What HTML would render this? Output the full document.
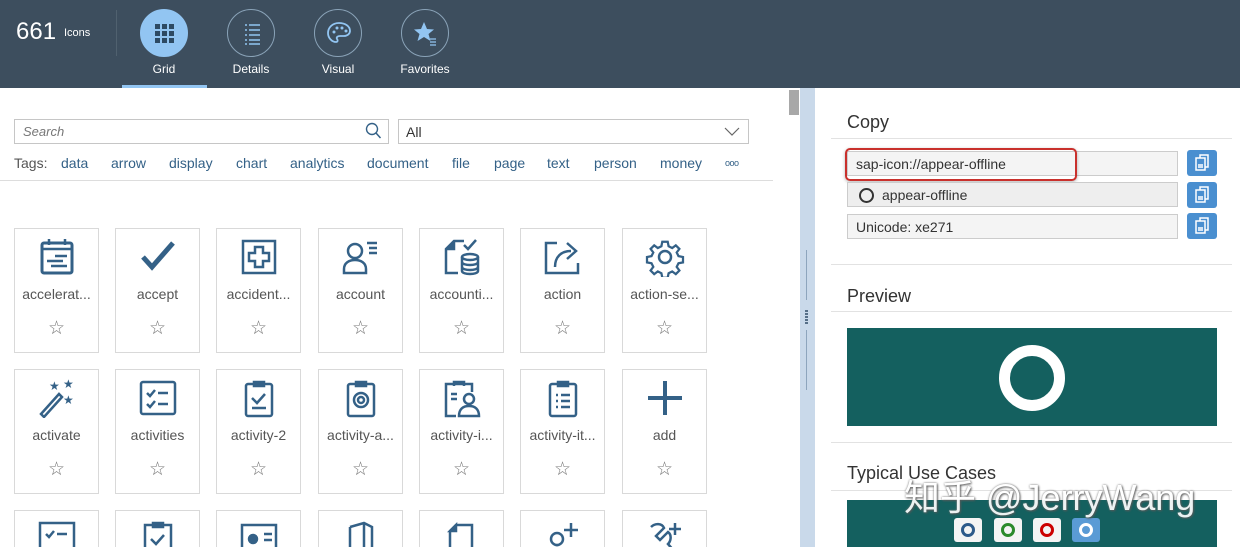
<!DOCTYPE html>
<html><head><meta charset="utf-8"><style>
*{box-sizing:border-box;margin:0;padding:0}
html{width:1240px;height:547px;overflow:hidden}
body{width:1240px;height:547px;overflow:hidden;background:#fff;font-family:"Liberation Sans",sans-serif;position:relative}
.abs{position:absolute}
#hdr{left:0;top:0;width:1240px;height:88px;background:#3d4e5e}
.nb{position:absolute;top:9px;width:48px;height:48px;border-radius:50%;border:1px solid #8aa3b8}
.nl{position:absolute;top:62px;color:#fff;font-size:12px;text-align:center;width:90px}
.tile{position:absolute;width:85px;height:125px;border:1px solid #d9d9d9;background:#fff}
.tile svg{position:absolute;left:22px;top:8px}
.tile .lb{position:absolute;top:57px;width:100%;text-align:center;font-size:14px;color:#555}
.tile .st{position:absolute;top:88px;width:100%;text-align:center;font-size:19px;color:#777}
.tag{position:absolute;top:155px;font-size:14px;color:#346187}
.fld{position:absolute;left:847px;width:331px;height:25px;border:1px solid #ccc;background:#f4f4f4;font-size:14px;color:#333;padding:4px 8px}
.cb{position:absolute;left:1187px;width:30px;height:26px;background:#4a8fd0;border-radius:3px}
.sec{position:absolute;left:847px;font-size:18px;color:#333}
.ln{position:absolute;left:831px;width:401px;height:1px;background:#e2e2e2}
.ub{position:absolute;top:518px;width:28px;height:24px;border-radius:3px;background:#f4f4f4}
.ub i{position:absolute;left:7px;top:5px;width:14px;height:14px;border-radius:50%;border:3px solid}
</style></head><body>
<div id="hdr" class="abs">
 <div class="abs" style="left:16px;top:18px;color:#fff;font-size:24px">661</div>
 <div class="abs" style="left:64px;top:27px;color:#fff;font-size:11px">Icons</div>
 <div class="abs" style="left:116px;top:10px;width:1px;height:46px;background:#50616f"></div>
 <div class="nb" style="left:140px;background:#92c5f2;border-color:#92c5f2"><svg width="48" height="48"><g fill="#2d4a63"><rect x="14" y="14" width="5" height="5"/><rect x="21" y="14" width="5" height="5"/><rect x="28" y="14" width="5" height="5"/><rect x="14" y="21" width="5" height="5"/><rect x="21" y="21" width="5" height="5"/><rect x="28" y="21" width="5" height="5"/><rect x="14" y="28" width="5" height="5"/><rect x="21" y="28" width="5" height="5"/><rect x="28" y="28" width="5" height="5"/></g></svg></div>
 <div class="nl" style="left:119px">Grid</div>
 <div class="abs" style="left:122px;top:85px;width:85px;height:3px;background:#92c5f2"></div>
 <div class="nb" style="left:227px"><svg width="48" height="48" stroke="#92c5f2" stroke-width="1.5"><path d="M17 15h2M21 15h11M17 20h2M21 20h11M17 25h2M21 25h11M17 30h2M21 30h11M17 34h2M21 34h11"/></svg></div>
 <div class="nl" style="left:206px">Details</div>
 <div class="nb" style="left:314px"><svg width="48" height="48"><path d="M24 13c-7 0-11 5-11 10 0 5 4 9 8 9 2 0 2-2 1-3-1-2 1-3 3-3h4c3 0 6-2 6-5 0-5-5-8-11-8z" fill="none" stroke="#92c5f2" stroke-width="1.8"/><g fill="#92c5f2"><circle cx="19" cy="22" r="1.5"/><circle cx="22" cy="18" r="1.5"/><circle cx="27" cy="18" r="1.5"/><circle cx="31" cy="21" r="1.5"/></g></svg></div>
 <div class="nl" style="left:293px">Visual</div>
 <div class="nb" style="left:401px"><svg width="48" height="48"><path d="M22 12l3 7 7 .5-5.5 4.5 2 7-6.5-4-6.5 4 2-7L12 19.5l7-.5z" fill="#92c5f2"/><path d="M28 29h6M28 32h6M28 35h6" stroke="#92c5f2" stroke-width="1.3"/></svg></div>
 <div class="nl" style="left:380px">Favorites</div>
</div>
<div class="abs" style="left:789px;top:90px;width:10px;height:25px;background:#a8a8a8"></div>
<div class="abs" style="left:800px;top:88px;width:15px;height:459px;background:#c9d9ea"></div>
<div class="abs" style="left:806px;top:250px;width:1px;height:50px;background:#8da5bd"></div>
<div class="abs" style="left:806px;top:330px;width:1px;height:60px;background:#8da5bd"></div>
<div class="abs" style="left:805px;top:310px;width:3px;height:14px;background:repeating-linear-gradient(#566f88 0 2px,transparent 2px 3px)"></div>

<div class="abs" style="left:14px;top:119px;width:375px;height:25px;border:1px solid #c6c6c6"></div>
<div class="abs" style="left:23px;top:124px;font-size:13px;color:#777;font-style:italic">Search</div>
<svg class="abs" style="left:364px;top:122px" width="18" height="18"><circle cx="8" cy="7" r="5.5" fill="none" stroke="#346187" stroke-width="1.4"/><path d="M12 11l4.5 5" stroke="#346187" stroke-width="1.5"/></svg>
<div class="abs" style="left:398px;top:119px;width:351px;height:25px;border:1px solid #c6c6c6"></div>
<div class="abs" style="left:406px;top:124px;font-size:14px;color:#333">All</div>
<svg class="abs" style="left:724px;top:125px" width="16" height="12"><path d="M1 3l7 7 7-7" fill="none" stroke="#666" stroke-width="1.2"/></svg>
<div class="tag" style="left:14px;color:#555">Tags:</div>
<div class="tag" style="left:61px">data</div><div class="tag" style="left:111px">arrow</div><div class="tag" style="left:169px">display</div><div class="tag" style="left:236px">chart</div><div class="tag" style="left:290px">analytics</div><div class="tag" style="left:367px">document</div><div class="tag" style="left:452px">file</div><div class="tag" style="left:494px">page</div><div class="tag" style="left:547px">text</div><div class="tag" style="left:594px">person</div><div class="tag" style="left:660px">money</div><div class="tag" style="left:725px;font-size:9px;top:158px;letter-spacing:-0.5px">ooo</div>
<div class="abs" style="left:0;top:180px;width:773px;height:1px;background:#ddd"></div>

<div class="tile" style="left:14px;top:228px"><svg width="40" height="40" fill="none" stroke="#346187" stroke-width="3"><rect x="5" y="6" width="30" height="30" rx="2"/><path d="M5 12h30M12 2v6M28 2v6M18 19h12M10 24h16M14 29h16" stroke-width="2.5"/></svg><div class="lb">accelerat...</div><div class="st">☆</div></div>
<div class="tile" style="left:115px;top:228px"><svg width="40" height="40" fill="none" stroke="#346187" stroke-width="5"><path d="M5 20l9 10L35 6"/></svg><div class="lb">accept</div><div class="st">☆</div></div>
<div class="tile" style="left:216px;top:228px"><svg width="40" height="40" fill="none" stroke="#346187" stroke-width="2.5"><rect x="4" y="4" width="32" height="32"/><path d="M16 10h8v6h6v8h-6v6h-8v-6h-6v-8h6z"/></svg><div class="lb">accident...</div><div class="st">☆</div></div>
<div class="tile" style="left:318px;top:228px"><svg width="40" height="40" fill="none" stroke="#346187" stroke-width="2.5"><circle cx="14" cy="14" r="7"/><path d="M3 36v-4c0-6 5-9 11-9s11 3 11 9v4zM26 6h10M28 11h8M28 16h8"/></svg><div class="lb">account</div><div class="st">☆</div></div>
<div class="tile" style="left:419px;top:228px"><svg width="40" height="40" fill="none" stroke="#346187" stroke-width="2.5"><path d="M16 36H4V12l8-8h10"/><path d="M4 12h8V4" fill="#346187"/><path d="M22 8l4 4 8-9"/><ellipse cx="28" cy="20" rx="8" ry="3"/><path d="M20 20v14c0 4 16 4 16 0V20M20 25c0 4 16 4 16 0M20 30c0 4 16 4 16 0"/></svg><div class="lb">accounti...</div><div class="st">☆</div></div>
<div class="tile" style="left:520px;top:228px"><svg width="40" height="40" fill="none" stroke="#346187" stroke-width="2.5"><path d="M14 6H3v30h32V26M12 30c0-10 6-16 16-16M24 6l9 8-9 8"/></svg><div class="lb">action</div><div class="st">☆</div></div>
<div class="tile" style="left:622px;top:228px"><svg width="40" height="40" fill="none" stroke="#346187" stroke-width="2.5"><circle cx="20" cy="20" r="6"/><path d="M17 3h6l1 5 4 2 4-3 4 4-3 4 2 4 5 1v6l-5 1-2 4 3 4-4 4-4-3-4 2-1 5h-6l-1-5-4-2-4 3-4-4 3-4-2-4-5-1v-6l5-1 2-4-3-4 4-4 4 3 4-2z" transform="translate(2 2) scale(.9)"/></svg><div class="lb">action-se...</div><div class="st">☆</div></div>

<div class="tile" style="left:14px;top:369px"><svg width="40" height="40"><path d="M4 36l18-20 3 3-18 20z" fill="none" stroke="#346187" stroke-width="2.5"/><g fill="#346187" font-size="12"><text x="12" y="12">★</text><text x="26" y="10">★</text><text x="26" y="26">★</text></g></svg><div class="lb">activate</div><div class="st">☆</div></div>
<div class="tile" style="left:115px;top:369px"><svg width="40" height="40" fill="none" stroke="#346187" stroke-width="2.5"><rect x="3" y="4" width="34" height="32" rx="2"/><path d="M9 15l3 3 5-6M20 15h10M9 26l3 3 5-6M20 26h10"/></svg><div class="lb">activities</div><div class="st">☆</div></div>
<div class="tile" style="left:216px;top:369px"><svg width="40" height="40" fill="none" stroke="#346187" stroke-width="2.5"><rect x="7" y="6" width="26" height="32" rx="2"/><path d="M15 8V4h10v4zM13 20l5 5 8-9M13 30h14"/></svg><div class="lb">activity-2</div><div class="st">☆</div></div>
<div class="tile" style="left:318px;top:369px"><svg width="40" height="40" fill="none" stroke="#346187" stroke-width="2.5"><rect x="7" y="6" width="26" height="32" rx="2"/><path d="M15 8V4h10v4z"/><circle cx="20" cy="22" r="7"/><circle cx="20" cy="22" r="3"/></svg><div class="lb">activity-a...</div><div class="st">☆</div></div>
<div class="tile" style="left:419px;top:369px"><svg width="40" height="40" fill="none" stroke="#346187" stroke-width="2.5"><path d="M14 38H4V6h26v8M12 8V4h10v4M9 16h6M9 21h6"/><circle cx="27" cy="21" r="5"/><path d="M17 38c0-7 4-10 10-10s10 3 10 10z"/></svg><div class="lb">activity-i...</div><div class="st">☆</div></div>
<div class="tile" style="left:520px;top:369px"><svg width="40" height="40" fill="none" stroke="#346187" stroke-width="2.5"><rect x="7" y="6" width="26" height="32" rx="2"/><path d="M15 8V4h10v4zM13 17h2M18 17h9M13 23h2M18 23h9M13 29h2M18 29h9"/></svg><div class="lb">activity-it...</div><div class="st">☆</div></div>
<div class="tile" style="left:622px;top:369px"><svg width="40" height="40" fill="none" stroke="#346187" stroke-width="4"><path d="M20 3v34M3 20h34"/></svg><div class="lb">add</div><div class="st">☆</div></div>

<div class="tile" style="left:14px;top:510px;height:37px;border-bottom:none"><svg width="40" height="40" fill="none" stroke="#346187" stroke-width="2.5"><rect x="3" y="4" width="34" height="40"/><path d="M9 15l3 3 5-6M20 15h10"/></svg></div>
<div class="tile" style="left:115px;top:510px;height:37px;border-bottom:none"><svg width="40" height="40" fill="none" stroke="#346187" stroke-width="2.5"><rect x="7" y="6" width="26" height="40"/><path d="M15 8V4h10v4zM13 20l5 5 8-9"/></svg></div>
<div class="tile" style="left:216px;top:510px;height:37px;border-bottom:none"><svg width="40" height="40" fill="none" stroke="#346187" stroke-width="2.5"><rect x="3" y="6" width="34" height="40"/><circle cx="14" cy="20" r="4" fill="#346187"/><path d="M7 40v-10h14v10z" fill="#346187"/><path d="M25 15h8M25 21h8"/></svg></div>
<div class="tile" style="left:318px;top:510px;height:37px;border-bottom:none"><svg width="40" height="40" fill="none" stroke="#346187" stroke-width="2.5"><path d="M9 8l14-4 8 4v40M9 8v40M23 4v40"/></svg></div>
<div class="tile" style="left:419px;top:510px;height:37px;border-bottom:none"><svg width="40" height="40" fill="none" stroke="#346187" stroke-width="2.5"><path d="M8 48V12l6-6h16v42"/><path d="M8 12h6V6z" fill="#346187"/></svg></div>
<div class="tile" style="left:520px;top:510px;height:37px;border-bottom:none"><svg width="40" height="40" fill="none" stroke="#346187" stroke-width="2.5"><circle cx="14" cy="20" r="6"/><path d="M4 40c0-8 4-11 10-11s10 3 10 11M28 4v14M21 11h14"/></svg></div>
<div class="tile" style="left:622px;top:510px;height:37px;border-bottom:none"><svg width="40" height="40" fill="none" stroke="#346187" stroke-width="2.5"><path d="M6 8c4-4 11-4 13 1l-8 8 4 4 8-8c4 3 3 9 0 12L36 40M30 4v12M24 10h12"/></svg></div>

<div class="sec" style="top:112px">Copy</div>
<div class="ln" style="top:138px"></div>
<div class="fld" style="top:151px;background:#f4f4f4">sap-icon://appear-offline</div>
<div class="abs" style="left:845px;top:148px;width:232px;height:33px;border:2px solid #c9302c;border-radius:5px;box-shadow:0 1px 3px rgba(0,0,0,.3)"></div>
<div class="fld" style="top:182px;padding-left:34px;background:#eeeeee">appear-offline</div>
<div class="abs" style="left:859px;top:188px;width:15px;height:15px;border-radius:50%;border:2.5px solid #333"></div>
<div class="fld" style="top:214px">Unicode: xe271</div>
<div class="cb" style="top:150px"></div><div class="cb" style="top:182px"></div><div class="cb" style="top:213px"></div>
<svg class="abs" style="left:1193px;top:153px" width="20" height="90" fill="none" stroke="#fff" stroke-width="1.5"><g><rect x="3" y="5" width="9" height="12"/><path d="M7 5V2h8v12h-3M5 12h5M5 14h5"/></g><g transform="translate(0 32)"><rect x="3" y="5" width="9" height="12"/><path d="M7 5V2h8v12h-3M5 12h5M5 14h5"/></g><g transform="translate(0 63)"><rect x="3" y="5" width="9" height="12"/><path d="M7 5V2h8v12h-3M5 12h5M5 14h5"/></g></svg>
<div class="ln" style="top:264px"></div>
<div class="sec" style="top:286px">Preview</div>
<div class="ln" style="top:311px"></div>
<div class="abs" style="left:847px;top:328px;width:370px;height:98px;background:#14605f"></div>
<div class="abs" style="left:999px;top:345px;width:66px;height:66px;border-radius:50%;border:11px solid #fff"></div>
<div class="ln" style="top:442px"></div>
<div class="sec" style="top:463px">Typical Use Cases</div>
<div class="ln" style="top:490px"></div>
<div class="abs" style="left:847px;top:500px;width:370px;height:47px;background:#14605f"></div>
<div class="ub" style="left:954px"><i style="border-color:#2d5a8a"></i></div>
<div class="ub" style="left:994px"><i style="border-color:#2b8a2b"></i></div>
<div class="ub" style="left:1033px"><i style="border-color:#c00"></i></div>
<div class="ub" style="left:1072px;background:#5a9bd5"><i style="border-color:#fff"></i></div>
<div class="abs" style="left:904px;top:469px;font-size:36px;color:#fff;font-family:'Liberation Sans','Noto Sans CJK SC',sans-serif;text-shadow:1px 1px 2px #555,0 0 2px #777;opacity:.92;white-space:nowrap">知乎 @JerryWang</div>
</body></html>
